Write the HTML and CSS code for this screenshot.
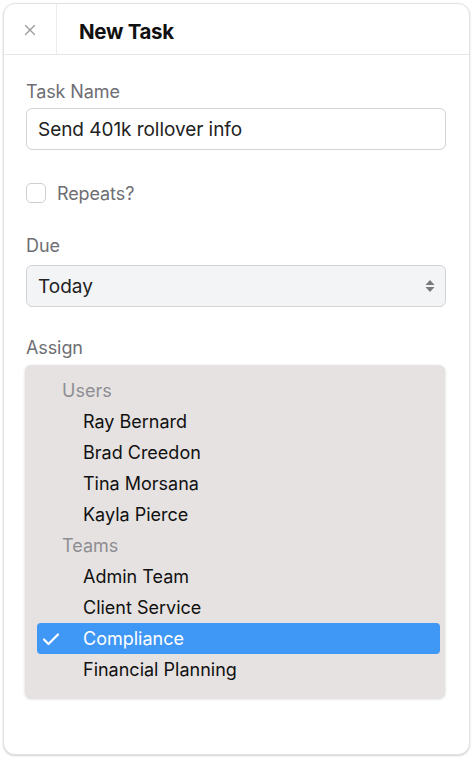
FILE: index.html
```html
<!DOCTYPE html>
<html>
<head>
<meta charset="utf-8">
<link rel="stylesheet" href="styles.css">
</head>
<body>
<div class="card">
  <div class="header">
    <div class="close">
      <svg width="12" height="12" viewBox="0 0 12 12"><path d="M1.5 1.5L10.5 10.5M10.5 1.5L1.5 10.5" stroke="#9a9a9a" stroke-width="1.3" fill="none" stroke-linecap="round"/></svg>
    </div>
    <div class="title">New Task</div>
  </div>
  <div class="body">
    <div class="label label-first">Task Name</div>
    <div class="input">Send 401k rollover info</div>

    <div class="check-row">
      <span class="checkbox"></span>
      <span class="check-label">Repeats?</span>
    </div>

    <div class="label label-due">Due</div>
    <div class="select">
      <span>Today</span>
      <svg class="arrows" width="10" height="14" viewBox="0 0 10 14"><path d="M5 1L9.5 6H0.5Z" fill="#7a7a7a"/><path d="M5 13L9.5 8H0.5Z" fill="#7a7a7a"/></svg>
    </div>

    <div class="label label-assign">Assign</div>
    <div class="menu">
      <div class="group">Users</div>
      <div class="item">Ray Bernard</div>
      <div class="item">Brad Creedon</div>
      <div class="item">Tina Morsana</div>
      <div class="item">Kayla Pierce</div>
      <div class="group">Teams</div>
      <div class="item">Admin Team</div>
      <div class="item">Client Service</div>
      <div class="item selected">
        <svg class="tick" width="18" height="14" viewBox="0 0 18 14"><path d="M2 7.5L6.5 12L16 2.5" stroke="#fff" stroke-width="2.2" fill="none" stroke-linecap="round" stroke-linejoin="round"/></svg>
        Compliance
      </div>
      <div class="item">Financial Planning</div>
    </div>
  </div>
</div>
</body>
</html>
```

FILE: styles.css
```css
* { box-sizing: border-box; }
html, body { margin: 0; padding: 0; background: #fff; }
body {
  font-family: Inter, "Noto Sans", "Liberation Sans", sans-serif;
  color: #1c1c1e;
  padding: 3px 4px 6px 3px;
}
.card {
  width: 467px;
  height: 752px;
  border: 1px solid #e2e2e2;
  border-radius: 12px;
  box-shadow: 0 1px 2px rgba(0,0,0,0.18);
  background: #fff;
  overflow: hidden;
}
.header {
  display: flex;
  height: 51px;
  border-bottom: 1px solid #e8e8e8;
}
.close {
  width: 53px;
  border-right: 1px solid #ececec;
  display: flex;
  align-items: center;
  justify-content: center;
  padding-top: 2px;
}
.title {
  display: flex;
  align-items: center;
  padding-left: 22px;
  padding-top: 5px;
  font-size: 20.5px;
  font-weight: 700;
  letter-spacing: -0.3px;
  color: #111;
}
.body {
  padding: 0 23px 0 22px;
}
.label {
  font-size: 18px;
  line-height: 22px;
  color: #6e6e73;
  letter-spacing: -0.1px;
}
.label-first { margin-top: 26px; }
.input {
  margin-top: 5px;
  height: 42px;
  border: 1px solid #d3d3d6;
  border-radius: 6px;
  padding-left: 11px;
  display: flex;
  align-items: center;
  font-size: 19px;
  color: #222;
  letter-spacing: -0.05px;
}
.check-row {
  display: flex;
  align-items: center;
  margin-top: 32px;
  height: 22px;
}
.checkbox {
  width: 20px;
  height: 20px;
  border: 1px solid #cfcfd3;
  border-radius: 5px;
  background: #fff;
}
.check-label {
  margin-left: 11px;
  font-size: 18px;
  color: #6e6e73;
  letter-spacing: -0.1px;
}
.label-due { margin-top: 31px; }
.select {
  margin-top: 8px;
  height: 42px;
  border: 1px solid #d3d3d6;
  border-radius: 6px;
  background: #f3f4f6;
  padding: 0 10px 0 11px;
  display: flex;
  align-items: center;
  justify-content: space-between;
  font-size: 19px;
  color: #222;
}
.label-assign { margin-top: 30px; }
.menu {
  margin-top: 6px;
  margin-left: -1px;
  margin-right: 1px;
  background: #e5e2e1;
  border-radius: 6px;
  box-shadow: 0 1px 3px rgba(0,0,0,0.18);
  padding: 10px 5px 13px 12px;
}
.group {
  height: 31px;
  display: flex;
  align-items: center;
  padding-left: 25px;
  font-size: 18px;
  color: #8e8e93;
}
.item {
  position: relative;
  height: 31px;
  display: flex;
  align-items: center;
  padding-left: 46px;
  font-size: 18px;
  color: #111;
  border-radius: 4px;
}
.item.selected {
  background: #3f97f6;
  color: #fff;
}
.tick {
  position: absolute;
  left: 5px;
  top: 9px;
}
```
